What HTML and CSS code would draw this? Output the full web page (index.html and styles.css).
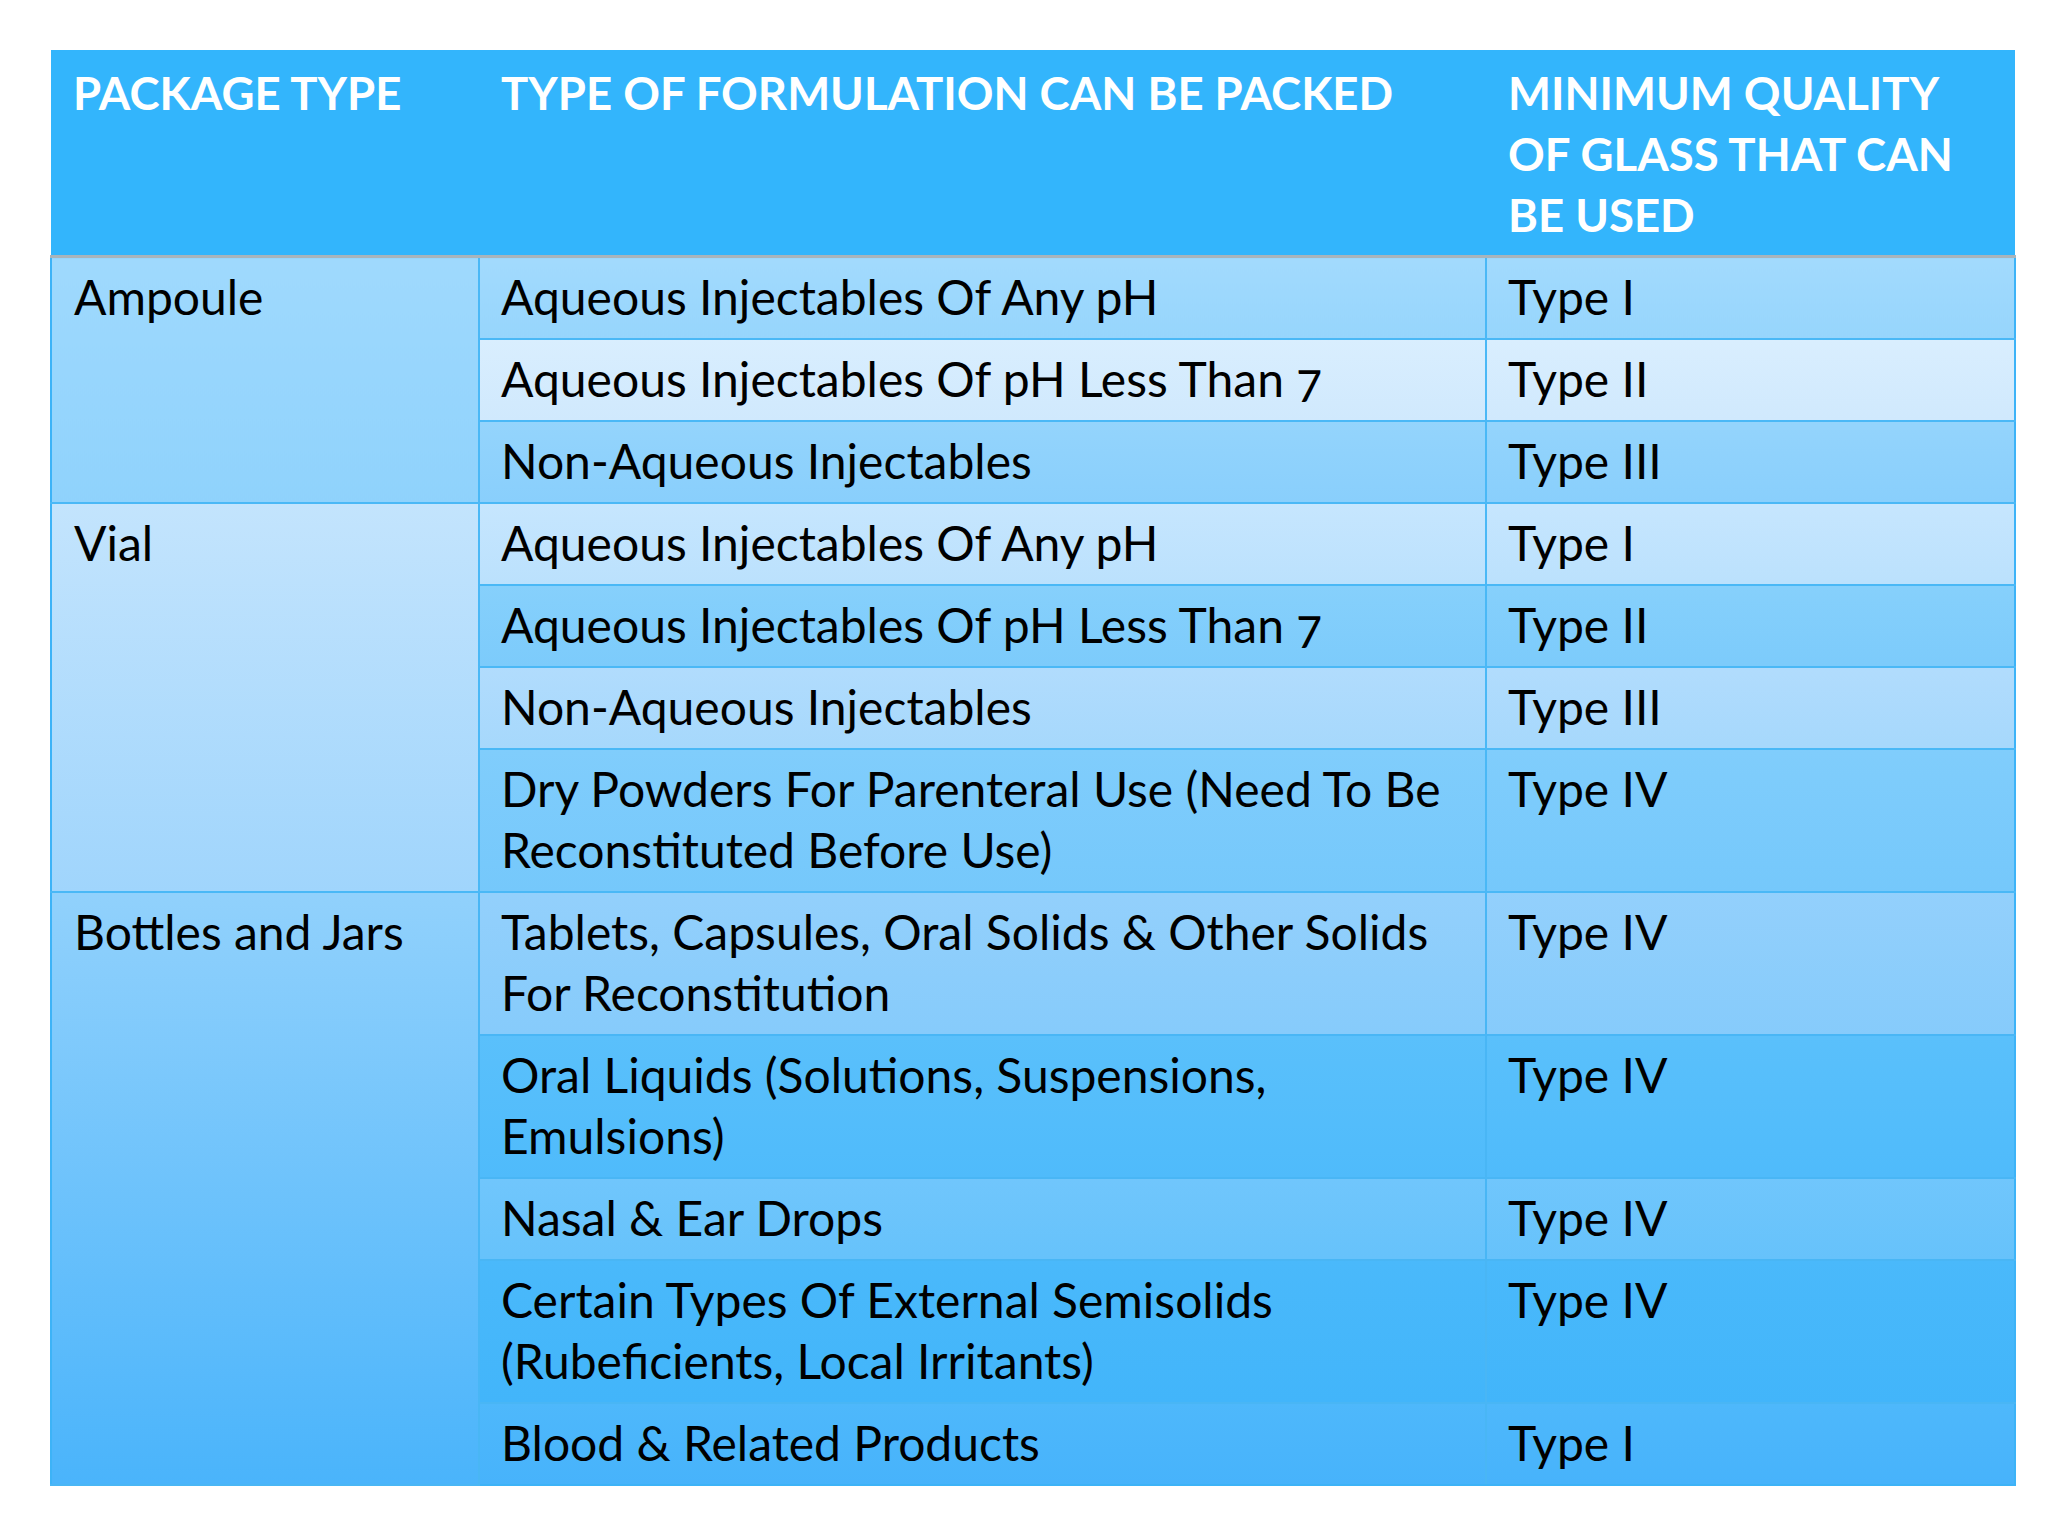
FILE: index.html
```html
<!DOCTYPE html>
<html>
<head>
<meta charset="utf-8">
<link rel="stylesheet" href="styles.css">
</head>
<body>
<table class="glass">
  <colgroup>
    <col class="c1">
    <col class="c2">
    <col class="c3">
  </colgroup>
  <thead>
    <tr>
      <th>PACKAGE TYPE</th>
      <th>TYPE OF FORMULATION CAN BE PACKED</th>
      <th class="h3">MINIMUM QUALITY OF GLASS THAT CAN BE USED</th>
    </tr>
  </thead>
  <tbody>
    <tr class="r1">
      <td rowspan="3" class="pk pk-amp">Ampoule</td>
      <td>Aqueous Injectables Of Any pH</td>
      <td>Type I</td>
    </tr>
    <tr class="r2">
      <td>Aqueous Injectables Of pH Less Than 7</td>
      <td>Type II</td>
    </tr>
    <tr class="r3">
      <td>Non-Aqueous Injectables</td>
      <td>Type III</td>
    </tr>
    <tr class="r4">
      <td rowspan="4" class="pk pk-vial">Vial</td>
      <td>Aqueous Injectables Of Any pH</td>
      <td>Type I</td>
    </tr>
    <tr class="r5">
      <td>Aqueous Injectables Of pH Less Than 7</td>
      <td>Type II</td>
    </tr>
    <tr class="r6">
      <td>Non-Aqueous Injectables</td>
      <td>Type III</td>
    </tr>
    <tr class="r7">
      <td>Dry Powders For Parenteral Use (Need To Be Reconstituted Before Use)</td>
      <td>Type IV</td>
    </tr>
    <tr class="r8">
      <td rowspan="5" class="pk pk-bot">Bottles and Jars</td>
      <td>Tablets, Capsules, Oral Solids &amp; Other Solids For Reconstitution</td>
      <td>Type IV</td>
    </tr>
    <tr class="r9">
      <td>Oral Liquids (Solutions, Suspensions, Emulsions)</td>
      <td>Type IV</td>
    </tr>
    <tr class="r10">
      <td>Nasal &amp; Ear Drops</td>
      <td>Type IV</td>
    </tr>
    <tr class="r11">
      <td>Certain Types Of External Semisolids (Rubeficients, Local Irritants)</td>
      <td>Type IV</td>
    </tr>
    <tr class="r12">
      <td>Blood &amp; Related Products</td>
      <td>Type I</td>
    </tr>
  </tbody>
</table>
</body>
</html>
```

FILE: styles.css
```css
html, body {
  margin: 0;
  padding: 0;
  background: #ffffff;
}

body {
  padding: 50px 0 0 50px;
  font-family: Lato, "Open Sans", sans-serif;
}

.glass {
  border-collapse: collapse;
  table-layout: fixed;
  width: 1964px;
  color: #000;
  font-size: 48px;
  line-height: 61px;
  font-variant-numeric: oldstyle-nums;
}

.c1 { width: 428px; }
.c2 { width: 1007px; }
.c3 { width: 529px; }

.glass th {
  background: #33b5fc;
  color: #ffffff;
  font-size: 45.5px;
  font-weight: 700;
  text-align: left;
  vertical-align: top;
  padding: 12px 20px 10px 22px;
  border-bottom: 3px solid #a9b4bb;
}

.glass th.h3 {
  padding-right: 40px;
}

.glass td {
  vertical-align: top;
  padding: 8px 16px 11px 21px;
  border: 2px solid #4ab8f6;
}

.glass td.pk {
  padding-left: 22px;
  border-left: 2px solid #3db3f7;
}

.glass td:last-child {
  border-right: 2px solid #3db3f7;
}

.r1 td { background: linear-gradient(#a2dafd, #96d5fc); }
.r2 td { background: linear-gradient(#d9eefe, #d0e9fd); }
.r3 td { background: linear-gradient(#94d4fc, #89cffc); }
.r4 td { background: linear-gradient(#c6e6fe, #bbe1fd); }
.r5 td { background: linear-gradient(#86d0fc, #7ccbfb); }
.r6 td { background: linear-gradient(#b1dcfd, #a6d8fc); }
.r7 td { background: linear-gradient(#80cdfc, #75c8fb); }
.r8 td { background: linear-gradient(#93d0fc, #86cbfb); }
.r9 td { background: linear-gradient(#5ac0fb, #4fbbfb); }
.r10 td { background: linear-gradient(#70c6fc, #66c2fb); }
.r11 td { background: linear-gradient(#4ab9fb, #42b5fa); }
.r12 td { background: linear-gradient(#4eb8fb, #47b3fb); }

.r8 td, .r9 td, .r10 td, .r11 td, .r12 td {
  border-color: #49b6f5;
}

.r12 td {
  border-bottom-color: #3db3f7;
}

.glass td.pk-amp { background: linear-gradient(#9fd9fd, #8fd2fc); }
.glass td.pk-vial { background: linear-gradient(#c3e4fd, #a0d5fc); }
.glass td.pk-bot { background: linear-gradient(#91d1fc, #4ab4fb); }
```
